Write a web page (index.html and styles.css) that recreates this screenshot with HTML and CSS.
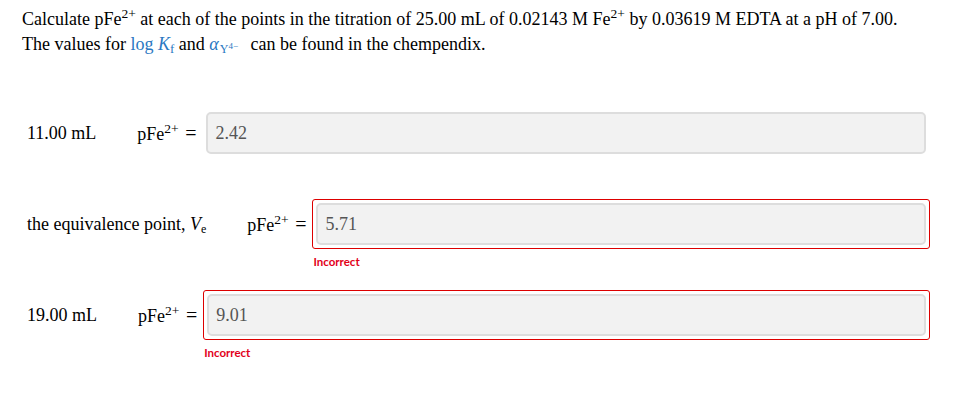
FILE: index.html
```html
<!DOCTYPE html>
<html>
<head>
<meta charset="utf-8">
<link rel="stylesheet" href="styles.css">
</head>
<body>
<div class="page">
  <p class="q">Calculate pFe<sup>2+</sup> at each of the points in the titration of 25.00 mL of 0.02143 M Fe<sup>2+</sup> by 0.03619 M EDTA at a pH of 7.00.<br>The values for <a class="lnk" href="#">log <i class="k">K</i><sub>f</sub></a> and <a class="lnk" href="#"><i>α</i><sub class="ysub">Y<sup>4−</sup></sub></a> can be found in the chempendix.</p>

  <div class="row">
    <div class="labels">
      <span class="lbl">11.00 mL</span>
      <span class="eq">pFe<sup>2+</sup> <span class="equals">=</span></span>
    </div>
    <div class="field">
      <div class="wrap"><div class="box">2.42</div></div>
      <div class="fb"></div>
    </div>
  </div>

  <div class="row">
    <div class="labels">
      <span class="lbl">the equivalence point, <i>V</i><sub class="vsub">e</sub></span>
      <span class="eq">pFe<sup>2+</sup> <span class="equals">=</span></span>
    </div>
    <div class="field">
      <div class="wrap bad"><div class="box">5.71</div></div>
      <div class="fb">Incorrect</div>
    </div>
  </div>

  <div class="row">
    <div class="labels">
      <span class="lbl">19.00 mL</span>
      <span class="eq">pFe<sup>2+</sup> <span class="equals">=</span></span>
    </div>
    <div class="field">
      <div class="wrap bad"><div class="box">9.01</div></div>
      <div class="fb">Incorrect</div>
    </div>
  </div>
</div>
</body>
</html>
```
FILE: styles.css
```css
html, body {
  margin: 0;
  padding: 0;
  background: #ffffff;
}
body {
  font-family: "Liberation Serif", "Times New Roman", serif;
  color: #000;
}
.page {
  width: 955px;
}
.q {
  margin: 0;
  padding: 7px 0 0 22px;
  font-size: 18px;
  line-height: 25px;
}
.q sup {
  font-size: 13.5px;
  line-height: 0;
  vertical-align: 7px;
}
.lnk {
  color: #2a78c2;
  text-decoration: none;
}
.lnk sub {
  font-size: 13px;
  line-height: 0;
  vertical-align: -3px;
}
.lnk .ysub {
  font-size: 12px;
  margin-left: 1px;
  margin-right: 8px;
}
.lnk .ysub sup {
  font-size: 9px;
  vertical-align: 4px;
}
.row {
  display: flex;
  align-items: flex-start;
  padding: 0 25px 0 27px;
  margin-bottom: 21px;
}
.row:first-of-type {
  margin-top: 51px;
}
.labels {
  display: flex;
  align-items: center;
  height: 50px;
  font-size: 18px;
  white-space: nowrap;
}
.lbl {
  margin-right: 41px;
}
.vsub {
  font-size: 12px;
  line-height: 0;
  vertical-align: -3px;
}
.eq {
  margin-right: 6px;
}
.eq sup {
  font-size: 13.5px;
  line-height: 0;
  vertical-align: 7px;
}
.equals {
  font-size: 20px;
  margin-left: 2px;
}
.field {
  flex: 1;
  display: flex;
  flex-direction: column;
}
.wrap {
  border: 1px solid transparent;
  border-radius: 3px;
  padding: 3px;
}
.wrap.bad {
  border-color: #dd0000;
}
.box {
  box-sizing: border-box;
  height: 42px;
  border: 2px solid #dddddd;
  border-radius: 5px;
  background: #f2f2f2;
  padding: 0 7px;
  display: flex;
  align-items: center;
  font-size: 18px;
  color: #555555;
}
.fb {
  height: 14px;
  margin-top: 6px;
  padding-left: 1px;
  font-family: Lato, "Open Sans", sans-serif;
  font-weight: bold;
  font-size: 11.5px;
  line-height: 14px;
  color: #e2001a;
}
```
